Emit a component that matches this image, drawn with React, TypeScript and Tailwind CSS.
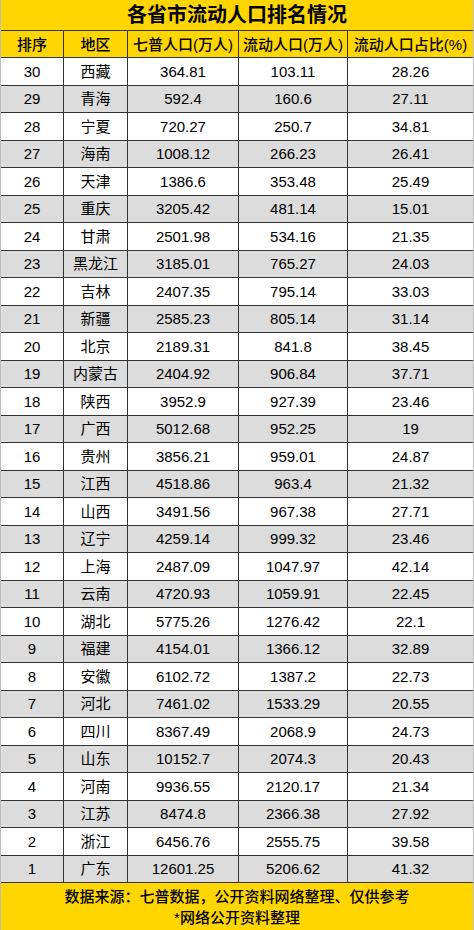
import React from "react";

const rows: [number, string, string, string, string][] = [
  [30, "西藏", "364.81", "103.11", "28.26"],
  [29, "青海", "592.4", "160.6", "27.11"],
  [28, "宁夏", "720.27", "250.7", "34.81"],
  [27, "海南", "1008.12", "266.23", "26.41"],
  [26, "天津", "1386.6", "353.48", "25.49"],
  [25, "重庆", "3205.42", "481.14", "15.01"],
  [24, "甘肃", "2501.98", "534.16", "21.35"],
  [23, "黑龙江", "3185.01", "765.27", "24.03"],
  [22, "吉林", "2407.35", "795.14", "33.03"],
  [21, "新疆", "2585.23", "805.14", "31.14"],
  [20, "北京", "2189.31", "841.8", "38.45"],
  [19, "内蒙古", "2404.92", "906.84", "37.71"],
  [18, "陕西", "3952.9", "927.39", "23.46"],
  [17, "广西", "5012.68", "952.25", "19"],
  [16, "贵州", "3856.21", "959.01", "24.87"],
  [15, "江西", "4518.86", "963.4", "21.32"],
  [14, "山西", "3491.56", "967.38", "27.71"],
  [13, "辽宁", "4259.14", "999.32", "23.46"],
  [12, "上海", "2487.09", "1047.97", "42.14"],
  [11, "云南", "4720.93", "1059.91", "22.45"],
  [10, "湖北", "5775.26", "1276.42", "22.1"],
  [9, "福建", "4154.01", "1366.12", "32.89"],
  [8, "安徽", "6102.72", "1387.2", "22.73"],
  [7, "河北", "7461.02", "1533.29", "20.55"],
  [6, "四川", "8367.49", "2068.9", "24.73"],
  [5, "山东", "10152.7", "2074.3", "20.43"],
  [4, "河南", "9936.55", "2120.17", "21.34"],
  [3, "江苏", "8474.8", "2366.38", "27.92"],
  [2, "浙江", "6456.76", "2555.75", "39.58"],
  [1, "广东", "12601.25", "5206.62", "41.32"],
];

const cols = "grid grid-cols-[63px_64px_111px_109px_125px]";
const font = { fontFamily: '"Liberation Sans", "Noto Sans CJK SC", sans-serif' };

export default function App() {
  return (
    <div className="w-[474px] h-[930px] bg-white text-black" style={font}>
      <div className="w-[474px] border-l border-r border-[#bdbdbd]">
        <div className="h-[31px] bg-[#FFD600] border-b border-[#333] flex items-center justify-center text-[20px] font-bold leading-none text-black">
          各省市流动人口排名情况
        </div>
        <div className={`${cols} h-[27px] bg-[#FFD600] border-b border-[#333] text-[15px] font-medium leading-none text-black`}>
          {["排序", "地区", "七普人口(万人)", "流动人口(万人)", "流动人口占比(%)"].map((h, i) => (
            <div key={i} className={`flex items-center justify-center whitespace-nowrap ${i < 4 ? "border-r border-[#333]" : ""}`}>
              {h}
            </div>
          ))}
        </div>
        {rows.map((r, ri) => (
          <div
            key={ri}
            className={`${cols} h-[27.5px] border-b border-[#333] text-[15px] leading-none ${ri % 2 === 0 ? "bg-white" : "bg-[#DCDCDC]"}`}
          >
            {r.map((c, i) => (
              <div key={i} className={`flex items-center justify-center whitespace-nowrap ${i < 4 ? "border-r border-[#333]" : ""}`}>
                {c}
              </div>
            ))}
          </div>
        ))}
        <div className="h-[48px] bg-[#FFD600] flex flex-col items-center justify-center text-[15px] leading-[21px] text-black font-medium">
          <div>数据来源：七普数据，公开资料网络整理、仅供参考</div>
          <div>*网络公开资料整理</div>
        </div>
      </div>
    </div>
  );
}
